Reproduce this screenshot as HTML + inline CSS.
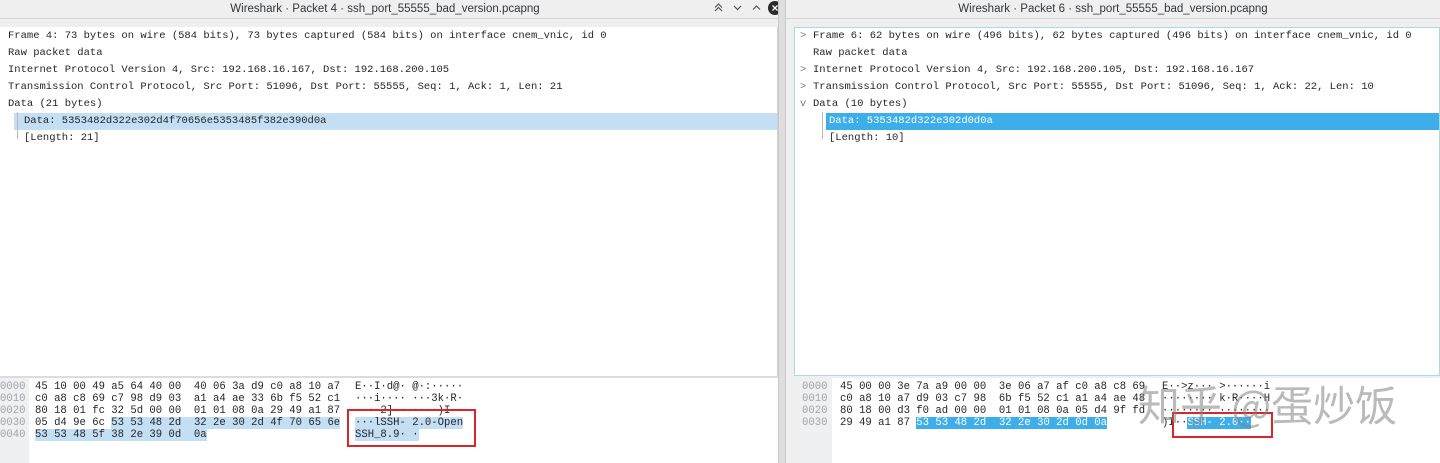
<!DOCTYPE html>
<html><head><meta charset="utf-8"><style>
*{margin:0;padding:0;box-sizing:border-box}
body{width:1440px;height:463px;overflow:hidden;background:#efefef;position:relative;font-family:"Liberation Mono",monospace;color:#232627}
.abs{position:absolute}
.title{font-family:"Liberation Sans",sans-serif;font-size:11.5px;color:#31363b;top:1px;height:16px;line-height:16px;text-align:center}
.pane{background:#fff;position:absolute}
.row{position:absolute;font-size:10.5px;height:17px;line-height:17px;white-space:pre}
.hx{position:absolute;font-size:10.6px;line-height:12px;white-space:pre}
.off{color:#a0a4a8}
.hl1{background:#c4def3}
.hl2{background:#3daee9;color:#fff}
.tl{position:absolute;border-left:1px solid #b8b8b8}
</style></head><body>
<!-- left window -->
<div class="abs title" style="left:0;width:770px">Wireshark · Packet 4 · ssh_port_55555_bad_version.pcapng</div>
<svg class="abs" style="left:710px;top:0" width="66" height="16" viewBox="0 0 66 16" fill="none" stroke="#555" stroke-width="1.2">
<path d="M5 7.5 L8.5 4 L12 7.5 M5 11 L8.5 7.5 L12 11"/>
<path d="M24 6 L27.5 9.5 L31 6"/>
<path d="M43 9.5 L46.5 6 L50 9.5"/>
</svg>
<div class="abs" style="left:768px;top:1px;width:14px;height:14px;border-radius:7px;background:#2b2b2b"></div>
<svg class="abs" style="left:768px;top:1px" width="14" height="14"><path d="M4.5 4.5 L9.5 9.5 M9.5 4.5 L4.5 9.5" stroke="#fff" stroke-width="1.4"/></svg>
<div class="abs" style="left:0;top:18px;width:786px;height:1px;background:#d6d6d6"></div>
<div class="pane" style="left:0;top:27px;width:778px;height:349px;border-right:1px solid #d0d0d0"></div>
<div class="row" style="left:8px;top:28px">Frame 4: 73 bytes on wire (584 bits), 73 bytes captured (584 bits) on interface cnem_vnic, id 0</div>
<div class="row" style="left:8px;top:45px">Raw packet data</div>
<div class="row" style="left:8px;top:62px">Internet Protocol Version 4, Src: 192.168.16.167, Dst: 192.168.200.105</div>
<div class="row" style="left:8px;top:79px">Transmission Control Protocol, Src Port: 51096, Dst Port: 55555, Seq: 1, Ack: 1, Len: 21</div>
<div class="row" style="left:8px;top:96px">Data (21 bytes)</div>
<div class="abs hl1" style="left:14px;top:113px;width:763px;height:17px"></div>
<div class="row" style="left:24px;top:113px">Data: 5353482d322e302d4f70656e5353485f382e390d0a</div>
<div class="row" style="left:24px;top:130px">[Length: 21]</div>
<div class="tl" style="left:17px;top:112px;height:27px"></div>
<div class="abs" style="left:0;top:376px;width:778px;height:2px;background:#dcdcdc"></div>
<div class="pane" style="left:0;top:378px;width:778px;height:85px"></div>
<div class="abs" style="left:0;top:378px;width:29px;height:85px;background:#eff0f1"></div>
<div class="hx off" style="left:0;top:381px">0000
0010
0020
0030
0040</div>
<div class="hx" style="left:35px;top:381px">45 10 00 49 a5 64 40 00  40 06 3a d9 c0 a8 10 a7
c0 a8 c8 69 c7 98 d9 03  a1 a4 ae 33 6b f5 52 c1
80 18 01 fc 32 5d 00 00  01 01 08 0a 29 49 a1 87
05 d4 9e 6c <span class="hl1">53 53 48 2d  32 2e 30 2d 4f 70 65 6e</span>
<span class="hl1">53 53 48 5f 38 2e 39 0d  0a</span></div>
<div class="hx" style="left:355px;top:381px">E··I·d@· @·:·····
···i···· ···3k·R·
····2]·· ····)I··
<span class="hl1">···lSSH- 2.0-Open</span>
<span class="hl1">SSH_8.9· ·</span></div>
<div class="abs" style="left:347px;top:409px;width:129px;height:38px;border:2px solid #d9262b"></div>
<!-- splitter -->
<div class="abs" style="left:778px;top:0;width:8px;height:463px;background:#dedede;border-left:1px solid #c8c8c8;border-right:1px solid #c8c8c8"></div>
<!-- right window -->
<div class="abs title" style="left:786px;width:654px">Wireshark · Packet 6 · ssh_port_55555_bad_version.pcapng</div>
<div class="abs" style="left:786px;top:18px;width:654px;height:1px;background:#d6d6d6"></div>
<div class="pane" style="left:794px;top:27px;width:646px;height:349px;border:1px solid #a9d8ec"></div>
<div class="row" style="left:800px;top:28px;color:#777">&gt;</div>
<div class="row" style="left:800px;top:62px;color:#777">&gt;</div>
<div class="row" style="left:800px;top:79px;color:#777">&gt;</div>
<div class="row" style="left:800px;top:96px;color:#777">v</div>
<div class="row" style="left:813px;top:28px">Frame 6: 62 bytes on wire (496 bits), 62 bytes captured (496 bits) on interface cnem_vnic, id 0</div>
<div class="row" style="left:813px;top:45px">Raw packet data</div>
<div class="row" style="left:813px;top:62px">Internet Protocol Version 4, Src: 192.168.200.105, Dst: 192.168.16.167</div>
<div class="row" style="left:813px;top:79px">Transmission Control Protocol, Src Port: 55555, Dst Port: 51096, Seq: 1, Ack: 22, Len: 10</div>
<div class="row" style="left:813px;top:96px">Data (10 bytes)</div>
<div class="abs hl2" style="left:826px;top:113px;width:613px;height:17px"></div>
<div class="row" style="left:829px;top:113px;color:#fff">Data: 5353482d322e302d0d0a</div>
<div class="row" style="left:829px;top:130px">[Length: 10]</div>
<div class="tl" style="left:822px;top:112px;height:27px"></div>
<div class="pane" style="left:794px;top:378px;width:646px;height:85px"></div>
<div class="abs" style="left:794px;top:378px;width:38px;height:85px;background:#eff0f1"></div>
<div class="hx off" style="left:802px;top:381px">0000
0010
0020
0030</div>
<div class="hx" style="left:840px;top:381px">45 00 00 3e 7a a9 00 00  3e 06 a7 af c0 a8 c8 69
c0 a8 10 a7 d9 03 c7 98  6b f5 52 c1 a1 a4 ae 48
80 18 00 d3 f0 ad 00 00  01 01 08 0a 05 d4 9f fd
29 49 a1 87 <span class="hl2">53 53 48 2d  32 2e 30 2d 0d 0a</span></div>
<div class="hx" style="left:1162px;top:381px">E··&gt;z··· &gt;······i
········ k·R····H
········ ········
)I··<span class="hl2">SSH- 2.0··</span></div>
<div class="abs" style="left:1172px;top:412px;width:101px;height:26px;border:2px solid #d9262b"></div>
<div class="abs" style="left:1138px;top:374px;font-family:'Noto Sans CJK SC',sans-serif;font-size:42px;line-height:60px;color:rgba(130,130,130,0.55);white-space:nowrap">知乎 @蛋炒饭</div>
</body></html>
